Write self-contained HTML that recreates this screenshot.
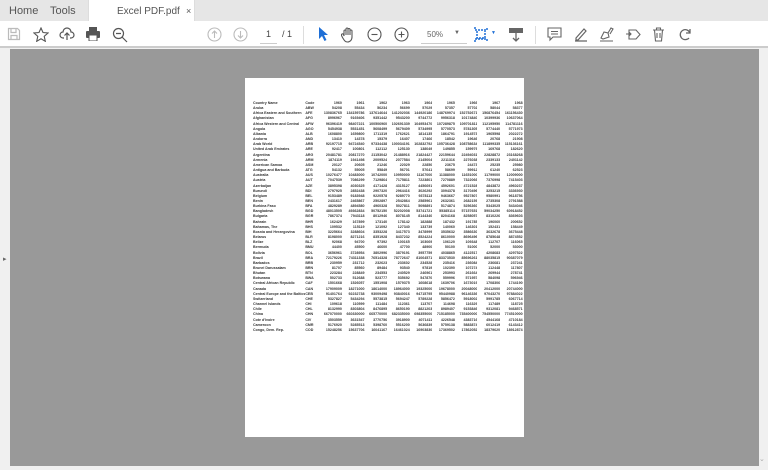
<!DOCTYPE html><html><head><style>
*{margin:0;padding:0;box-sizing:border-box}
body{width:768px;height:470px;overflow:hidden;background:#f0f0f0;font-family:"Liberation Sans",sans-serif;position:relative}
.tabs{position:absolute;left:0;top:0;width:768px;height:21px;background:#e6e6e6}
.tab{position:absolute;top:5px;font-size:11px;color:#555}
.act{position:absolute;left:88px;top:0;width:107px;height:22px;background:#fff;border-left:1px solid #ddd;border-right:1px solid #ddd}
.tb{position:absolute;left:0;top:21px;width:768px;height:27px;background:#fff;border-bottom:2px solid #ccc}
.ic{position:absolute;top:6px}
.view{position:absolute;left:10px;top:49px;width:749px;height:417px;background:#999}
.page{position:absolute;left:245px;top:78px;width:279px;height:359px;background:#fff}
table{position:absolute;left:8px;top:23px;border-collapse:collapse;font-size:3.6px;color:#333;font-weight:bold}
td{height:5.15px;padding:0;line-height:5.15px;text-align:right;width:22.6px;white-space:nowrap;overflow:hidden}
td:first-child{text-align:left;width:52px}
td:nth-child(2){text-align:left;width:14px}
</style></head><body>
<div class="tabs">
<span class="tab" style="left:9px">Home</span><span class="tab" style="left:50px">Tools</span>
<div class="act"><span class="tab" style="left:28px;font-size:10px;top:6px">Excel PDF.pdf</span><span class="tab" style="left:97px;font-size:9px;top:6px">×</span></div>
</div>
<div class="tb">
<svg class="ic" style="left:7px" width="14" height="14" viewBox="0 0 14 14" fill="none" stroke="#bbb" stroke-width="1.2"><path d="M1.5 1.5h9l2 2v9h-11z M4 1.5v4h5v-4 M4 12.5v-4h6v4"/></svg>
<svg class="ic" style="left:33px" width="16" height="15" viewBox="0 0 16 15" fill="none" stroke="#555" stroke-width="1.1"><path d="M8 1l2 4.5 5 .5-3.8 3.3 1.1 5L8 11.8 3.7 14.3l1.1-5L1 6l5-.5z"/></svg>
<svg class="ic" style="left:59px" width="16" height="14" viewBox="0 0 16 14" fill="none" stroke="#555" stroke-width="1.2"><path d="M5 11H4a3 3 0 0 1 0-6 4 4 0 0 1 8 0 3 3 0 0 1 0 6h-1M8 13V6M5.5 8.5L8 6l2.5 2.5"/></svg>
<svg class="ic" style="left:85px" width="16" height="14" viewBox="0 0 16 14"><rect x="4" y="0" width="8" height="4" fill="#555"/><rect x="1" y="4" width="14" height="7" rx="1" fill="#555"/><rect x="4" y="8" width="8" height="6" fill="#fff" stroke="#555"/></svg>
<svg class="ic" style="left:112px" width="16" height="16" viewBox="0 0 16 16" fill="none" stroke="#555" stroke-width="1.2"><circle cx="6.5" cy="6.5" r="5"/><path d="M4 6.5h5M10 10l5 5"/></svg>
<svg class="ic" style="left:207px" width="15" height="15" viewBox="0 0 15 15" fill="none" stroke="#bbb" stroke-width="1.1"><circle cx="7.5" cy="7.5" r="6.5"/><path d="M7.5 11V4M5 6.5l2.5-2.5 2.5 2.5"/></svg>
<svg class="ic" style="left:233px" width="15" height="15" viewBox="0 0 15 15" fill="none" stroke="#bbb" stroke-width="1.1"><circle cx="7.5" cy="7.5" r="6.5"/><path d="M7.5 4v7M5 8.5l2.5 2.5 2.5-2.5"/></svg>
<span style="position:absolute;left:266px;top:8px;font-size:9px;color:#444">1</span>
<div style="position:absolute;left:260px;top:22px;width:17px;border-top:1px solid #ccc"></div>
<span style="position:absolute;left:282px;top:8px;font-size:9px;color:#444">/ 1</span>
<div style="position:absolute;left:303px;top:5px;height:18px;border-left:1px solid #ddd"></div>
<svg class="ic" style="left:318px" width="10" height="15" viewBox="0 0 10 15"><path d="M1 0v12l3-3 2.5 5 2-1-2.5-5H10z" fill="#1e6fd6"/></svg>
<svg class="ic" style="left:341px" width="15" height="16" viewBox="0 0 15 16" fill="none" stroke="#555" stroke-width="1.1"><path d="M3 9V4a1 1 0 0 1 2 0v4V2a1 1 0 0 1 2 0v6V2.5a1 1 0 0 1 2 0V8V4a1 1 0 0 1 2 0v6c0 3-2 5-4.5 5S3 13 1.5 10.5l-1-2a1 1 0 0 1 2-1z"/></svg>
<svg class="ic" style="left:367px" width="15" height="15" viewBox="0 0 15 15" fill="none" stroke="#555" stroke-width="1.1"><circle cx="7.5" cy="7.5" r="6.5"/><path d="M4.5 7.5h6"/></svg>
<svg class="ic" style="left:394px" width="15" height="15" viewBox="0 0 15 15" fill="none" stroke="#555" stroke-width="1.1"><circle cx="7.5" cy="7.5" r="6.5"/><path d="M4.5 7.5h6M7.5 4.5v6"/></svg>
<span style="position:absolute;left:427px;top:9px;font-size:8px;color:#666">50%</span>
<span style="position:absolute;left:454px;top:9px;font-size:6px;color:#666">▼</span>
<div style="position:absolute;left:421px;top:22px;width:46px;border-top:1px solid #ccc"></div>
<svg class="ic" style="left:474px" width="14" height="15" viewBox="0 0 14 15" fill="none" stroke="#1e6fd6" stroke-width="1.5"><path d="M1 0v3h12V0M1 15v-3h12v3M3 4v7h8V4" stroke-dasharray="2 1"/></svg>
<span style="position:absolute;left:491px;top:9px;font-size:5px;color:#1e6fd6">▼</span>
<svg class="ic" style="left:508px" width="16" height="15" viewBox="0 0 16 15"><rect x="1" y="1" width="14" height="5" fill="#666"/><path d="M8 6v8M5 11l3 3 3-3" stroke="#666" stroke-width="1.3" fill="none"/></svg>
<div style="position:absolute;left:535px;top:5px;height:18px;border-left:1px solid #ddd"></div>
<svg class="ic" style="left:547px" width="15" height="15" viewBox="0 0 15 15" fill="none" stroke="#666" stroke-width="1.1"><path d="M1 1h13v9H6l-3 3v-3H1z M4 4.5h7M4 7h7"/></svg>
<svg class="ic" style="left:573px" width="15" height="15" viewBox="0 0 15 15" fill="none" stroke="#666" stroke-width="1.2"><path d="M3 11l8-9 2 2-8 9H3z M2 14h12" /></svg>
<svg class="ic" style="left:599px" width="15" height="15" viewBox="0 0 15 15" fill="none" stroke="#666" stroke-width="1.1"><path d="M2 11l3-6 4 1 1 4-6 2z M9 6l3-5 2 1-3 5 M1 14h13"/></svg>
<svg class="ic" style="left:625px" width="16" height="15" viewBox="0 0 16 15" fill="none" stroke="#666" stroke-width="1.1"><path d="M4 3h7l4 4.5-4 4.5H4z M1 7h5M4 5l2 2-2 2"/></svg>
<svg class="ic" style="left:652px" width="13" height="15" viewBox="0 0 13 15" fill="none" stroke="#666" stroke-width="1.1"><path d="M1 3h11M4.5 3V1h4v2M2.5 3l1 11h6l1-11M5 6v5M8 6v5"/></svg>
<svg class="ic" style="left:678px" width="14" height="15" viewBox="0 0 14 15" fill="none" stroke="#666" stroke-width="1.3"><path d="M11 11a5 5 0 1 1 1-5M12 2v4H8"/></svg>
</div>
<div style="position:absolute;left:3px;top:255px;font-size:7px;color:#666">▸</div>
<div class="view"></div>
<div style="position:absolute;left:759px;top:455px;font-size:7px;color:#aaa">⌄</div>
<div class="page"><table>
<tr><td>Country Name</td><td>Code</td><td>1960</td><td>1961</td><td>1962</td><td>1963</td><td>1964</td><td>1965</td><td>1966</td><td>1967</td><td>1968</td></tr>
<tr><td>Aruba</td><td>ABW</td><td>54208</td><td>55434</td><td>56234</td><td>56699</td><td>57029</td><td>57357</td><td>57702</td><td>58044</td><td>58377</td></tr>
<tr><td>Africa Eastern and Southern</td><td>AFE</td><td>130836765</td><td>134159786</td><td>137614644</td><td>141202036</td><td>144920186</td><td>148769974</td><td>152752671</td><td>156876454</td><td>161156430</td></tr>
<tr><td>Afghanistan</td><td>AFG</td><td>8996967</td><td>9169406</td><td>9351442</td><td>9543200</td><td>9744772</td><td>9956318</td><td>10174840</td><td>10399936</td><td>10637064</td></tr>
<tr><td>Africa Western and Central</td><td>AFW</td><td>96396419</td><td>98407221</td><td>100506960</td><td>102691339</td><td>104953470</td><td>107289875</td><td>109701811</td><td>112195950</td><td>114781116</td></tr>
<tr><td>Angola</td><td>AGO</td><td>5454938</td><td>5531451</td><td>5608499</td><td>5679409</td><td>5734995</td><td>5770573</td><td>5781305</td><td>5774440</td><td>5771973</td></tr>
<tr><td>Albania</td><td>ALB</td><td>1608800</td><td>1659800</td><td>1711319</td><td>1762621</td><td>1814135</td><td>1864791</td><td>1914573</td><td>1965598</td><td>2022272</td></tr>
<tr><td>Andorra</td><td>AND</td><td>13410</td><td>14378</td><td>15379</td><td>16407</td><td>17466</td><td>18542</td><td>19646</td><td>20768</td><td>21908</td></tr>
<tr><td>Arab World</td><td>ARB</td><td>92197715</td><td>94724540</td><td>97334438</td><td>100034191</td><td>102832792</td><td>105736428</td><td>108758634</td><td>111899335</td><td>115136161</td></tr>
<tr><td>United Arab Emirates</td><td>ARE</td><td>92417</td><td>100801</td><td>112112</td><td>125130</td><td>138049</td><td>149855</td><td>159979</td><td>169768</td><td>182620</td></tr>
<tr><td>Argentina</td><td>ARG</td><td>20481781</td><td>20817270</td><td>21153042</td><td>21488916</td><td>21824427</td><td>22159644</td><td>22494031</td><td>22828872</td><td>23168268</td></tr>
<tr><td>Armenia</td><td>ARM</td><td>1874119</td><td>1941498</td><td>2009524</td><td>2077584</td><td>2145004</td><td>2211316</td><td>2276038</td><td>2339133</td><td>2401142</td></tr>
<tr><td>American Samoa</td><td>ASM</td><td>20127</td><td>20605</td><td>21246</td><td>22029</td><td>22850</td><td>23675</td><td>24473</td><td>25235</td><td>25980</td></tr>
<tr><td>Antigua and Barbuda</td><td>ATG</td><td>54132</td><td>55005</td><td>55849</td><td>56701</td><td>57641</td><td>58699</td><td>59912</td><td>61240</td><td>62523</td></tr>
<tr><td>Australia</td><td>AUS</td><td>10276477</td><td>10483000</td><td>10742000</td><td>10950000</td><td>11167000</td><td>11388000</td><td>11651000</td><td>11799000</td><td>12009000</td></tr>
<tr><td>Austria</td><td>AUT</td><td>7047539</td><td>7086299</td><td>7129864</td><td>7175811</td><td>7223801</td><td>7270889</td><td>7322066</td><td>7376998</td><td>7415403</td></tr>
<tr><td>Azerbaijan</td><td>AZE</td><td>3895398</td><td>4030325</td><td>4171428</td><td>4315127</td><td>4456691</td><td>4592601</td><td>4721528</td><td>4843872</td><td>4960237</td></tr>
<tr><td>Burundi</td><td>BDI</td><td>2797925</td><td>2852438</td><td>2907320</td><td>2964416</td><td>3026292</td><td>3094378</td><td>3170496</td><td>3253215</td><td>3336930</td></tr>
<tr><td>Belgium</td><td>BEL</td><td>9153489</td><td>9183948</td><td>9220578</td><td>9289770</td><td>9378113</td><td>9463667</td><td>9527807</td><td>9580991</td><td>9618756</td></tr>
<tr><td>Benin</td><td>BEN</td><td>2431617</td><td>2465867</td><td>2502897</td><td>2542864</td><td>2585961</td><td>2632361</td><td>2682159</td><td>2735308</td><td>2791588</td></tr>
<tr><td>Burkina Faso</td><td>BFA</td><td>4829289</td><td>4894580</td><td>4960328</td><td>5027811</td><td>5098891</td><td>5174874</td><td>5256360</td><td>5343025</td><td>5434046</td></tr>
<tr><td>Bangladesh</td><td>BGD</td><td>48013505</td><td>49362834</td><td>50752150</td><td>52202008</td><td>53741721</td><td>55385114</td><td>57157651</td><td>59034250</td><td>60918452</td></tr>
<tr><td>Bulgaria</td><td>BGR</td><td>7867374</td><td>7943118</td><td>8012946</td><td>8078145</td><td>8144340</td><td>8204168</td><td>8258057</td><td>8310226</td><td>8369603</td></tr>
<tr><td>Bahrain</td><td>BHR</td><td>162429</td><td>167899</td><td>173140</td><td>178142</td><td>182888</td><td>187432</td><td>191785</td><td>196060</td><td>200652</td></tr>
<tr><td>Bahamas, The</td><td>BHS</td><td>109532</td><td>115119</td><td>121092</td><td>127340</td><td>133739</td><td>140060</td><td>146301</td><td>152431</td><td>158449</td></tr>
<tr><td>Bosnia and Herzegovina</td><td>BIH</td><td>3225664</td><td>3288604</td><td>3353228</td><td>3417573</td><td>3478999</td><td>3535632</td><td>3586630</td><td>3632678</td><td>3675448</td></tr>
<tr><td>Belarus</td><td>BLR</td><td>8198000</td><td>8271216</td><td>8351928</td><td>8437232</td><td>8524224</td><td>8610000</td><td>8696496</td><td>8785648</td><td>8874552</td></tr>
<tr><td>Belize</td><td>BLZ</td><td>92068</td><td>94700</td><td>97392</td><td>100165</td><td>103069</td><td>106120</td><td>109348</td><td>112707</td><td>116065</td></tr>
<tr><td>Bermuda</td><td>BMU</td><td>44400</td><td>45500</td><td>46600</td><td>47700</td><td>48900</td><td>50100</td><td>51000</td><td>52000</td><td>53000</td></tr>
<tr><td>Bolivia</td><td>BOL</td><td>3656961</td><td>3728954</td><td>3802996</td><td>3879191</td><td>3957759</td><td>4038865</td><td>4122517</td><td>4208683</td><td>4297522</td></tr>
<tr><td>Brazil</td><td>BRA</td><td>72179226</td><td>74311338</td><td>76514328</td><td>78772647</td><td>81064571</td><td>83373530</td><td>85696261</td><td>88035815</td><td>90387079</td></tr>
<tr><td>Barbados</td><td>BRB</td><td>230959</td><td>231712</td><td>232623</td><td>233602</td><td>234528</td><td>235416</td><td>236084</td><td>236681</td><td>237241</td></tr>
<tr><td>Brunei Darussalam</td><td>BRN</td><td>81707</td><td>85560</td><td>89484</td><td>93540</td><td>97819</td><td>102390</td><td>107274</td><td>112448</td><td>117807</td></tr>
<tr><td>Bhutan</td><td>BTN</td><td>223284</td><td>228849</td><td>234553</td><td>240529</td><td>246961</td><td>253993</td><td>261664</td><td>269944</td><td>278741</td></tr>
<tr><td>Botswana</td><td>BWA</td><td>502733</td><td>512688</td><td>523777</td><td>535692</td><td>547870</td><td>559996</td><td>571957</td><td>584098</td><td>596946</td></tr>
<tr><td>Central African Republic</td><td>CAF</td><td>1501668</td><td>1526057</td><td>1551908</td><td>1579375</td><td>1608618</td><td>1639706</td><td>1673019</td><td>1708306</td><td>1744190</td></tr>
<tr><td>Canada</td><td>CAN</td><td>17909009</td><td>18271000</td><td>18614000</td><td>18964000</td><td>19325000</td><td>19678000</td><td>20048000</td><td>20412000</td><td>20744000</td></tr>
<tr><td>Central Europe and the Baltics</td><td>CEB</td><td>91401764</td><td>92232738</td><td>93009498</td><td>93840016</td><td>94715795</td><td>95440988</td><td>96146336</td><td>97043270</td><td>97884022</td></tr>
<tr><td>Switzerland</td><td>CHE</td><td>5327827</td><td>5434294</td><td>5573815</td><td>5694247</td><td>5789228</td><td>5856472</td><td>5918002</td><td>5991785</td><td>6067714</td></tr>
<tr><td>Channel Islands</td><td>CHI</td><td>109618</td><td>110599</td><td>111484</td><td>112361</td><td>113707</td><td>114698</td><td>116329</td><td>117489</td><td>118725</td></tr>
<tr><td>Chile</td><td>CHL</td><td>8132990</td><td>8303804</td><td>8476895</td><td>8650190</td><td>8821203</td><td>8989407</td><td>9153846</td><td>9312081</td><td>9468571</td></tr>
<tr><td>China</td><td>CHN</td><td>667070000</td><td>660330000</td><td>665770000</td><td>682335000</td><td>698355000</td><td>715185000</td><td>735400000</td><td>754550000</td><td>774510000</td></tr>
<tr><td>Cote d'Ivoire</td><td>CIV</td><td>3503559</td><td>3631547</td><td>3770756</td><td>3918900</td><td>4071411</td><td>4226548</td><td>4383716</td><td>4544168</td><td>4710184</td></tr>
<tr><td>Cameroon</td><td>CMR</td><td>5176920</td><td>5285513</td><td>5398760</td><td>5516200</td><td>5636839</td><td>5759138</td><td>5883874</td><td>6012419</td><td>6143412</td></tr>
<tr><td>Congo, Dem. Rep.</td><td>COD</td><td>15248256</td><td>15637706</td><td>16041167</td><td>16461024</td><td>16903830</td><td>17369502</td><td>17862052</td><td>18379620</td><td>18912874</td></tr>
</table></div>
</body></html>
